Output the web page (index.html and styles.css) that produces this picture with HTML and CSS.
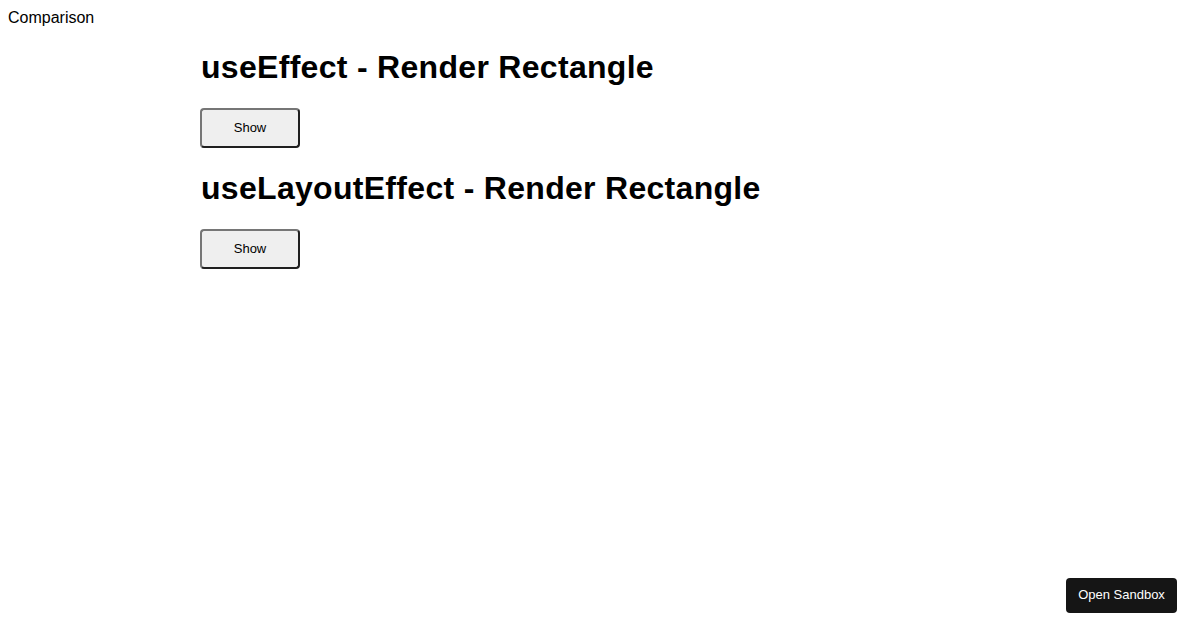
FILE: index.html
```html
<!DOCTYPE html>
<html>
<head>
<meta charset="utf-8">
<link rel="stylesheet" href="styles.css">
</head>
<body>
<div class="title">Comparison</div>
<div class="content">
  <section class="demo">
    <h1 class="heading">useEffect - Render Rectangle</h1>
    <div class="controls"><button class="btn">Show</button></div>
  </section>
  <section class="demo">
    <h1 class="heading">useLayoutEffect - Render Rectangle</h1>
    <div class="controls"><button class="btn">Show</button></div>
  </section>
</div>
<a class="sandbox">Open Sandbox</a>
</body>
</html>
```
FILE: styles.css
```css
html, body {
  background: #fff;
}
body {
  margin: 8px;
  font-family: "Liberation Sans", Arial, sans-serif;
  color: #000;
  font-size: 16px;
}
.title {
  line-height: 19px;
}
.content {
  padding-left: 192px;
}
.heading {
  font-size: 32px;
  line-height: 37px;
  font-weight: bold;
  letter-spacing: 0.3px;
  margin: 22px 0 22px;
  padding-left: 1px;
}
.btn {
  display: block;
  width: 100px;
  height: 40px;
  background: #efefef;
  border: 2px solid;
  border-color: #767676 #1f1f1f #1f1f1f #767676;
  border-radius: 4px;
  font-family: "Liberation Sans", Arial, sans-serif;
  font-size: 13px;
  color: #000;
  padding: 0 0 2px;
  box-sizing: border-box;
}
.sandbox {
  position: fixed;
  right: 23px;
  bottom: 17px;
  width: 111px;
  height: 35px;
  padding-bottom: 2px;
  box-sizing: border-box;
  background: #151515;
  color: #fff;
  border-radius: 4px;
  font-size: 13px;
  display: flex;
  align-items: center;
  justify-content: center;
}
```
